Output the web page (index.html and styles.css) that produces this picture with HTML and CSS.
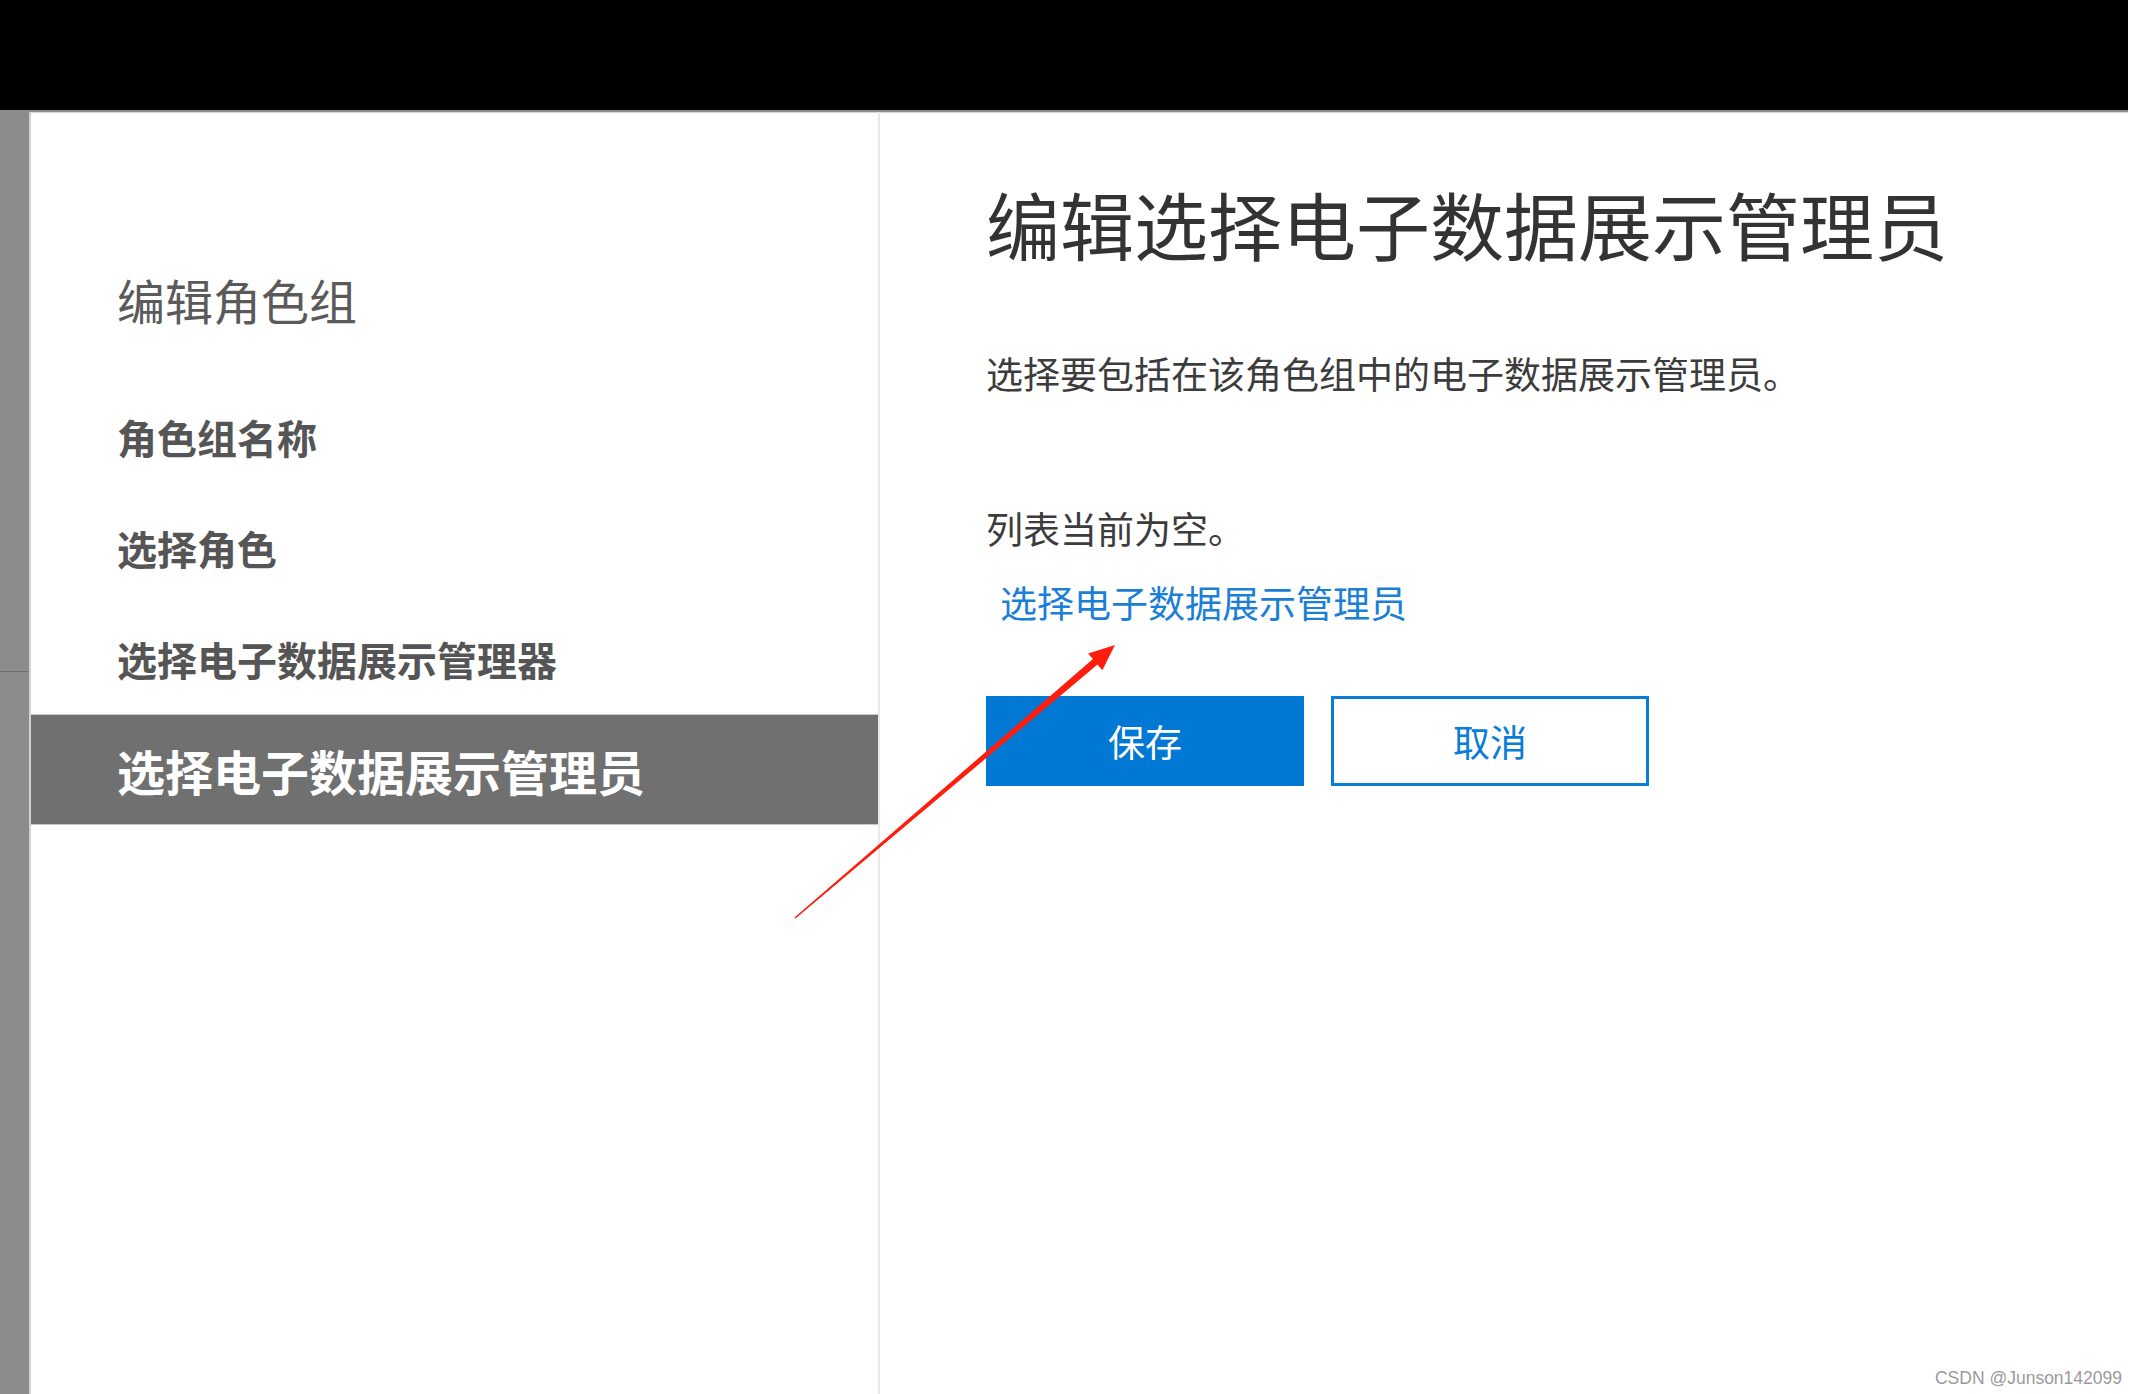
FILE: index.html
```html
<!DOCTYPE html>
<html lang="zh-CN">
<head>
    <meta charset="UTF-8">
    <meta name="viewport" content="width=device-width, initial-scale=1.0">
    <title>编辑角色组</title>
    <link rel="stylesheet" href="styles.css">
</head>
<body>
    <div class="window">
        <div class="titlebar"></div>

        <div class="window-body">
            <div class="side-strip">
                <div class="side-strip-top"></div>
            </div>

            <nav class="steps">
                <div class="steps-title">编辑角色组</div>
                <div class="step">角色组名称</div>
                <div class="step">选择角色</div>
                <div class="step">选择电子数据展示管理器</div>
                <div class="step active">选择电子数据展示管理员</div>
            </nav>

            <main class="content">
                <h1>编辑选择电子数据展示管理员</h1>
                <p class="desc">选择要包括在该角色组中的电子数据展示管理员。</p>
                <p class="empty">列表当前为空。</p>
                <a class="add-link" href="#">选择电子数据展示管理员</a>
                <div class="actions">
                    <button class="btn btn-primary">保存</button>
                    <button class="btn btn-outline">取消</button>
                </div>
            </main>
        </div>
    </div>

    <!-- red annotation arrow pointing at the link -->
    <svg class="annotation" width="2136" height="1394" viewBox="0 0 2136 1394">
        <polygon fill="#ff1d0d"
            points="794.5,917.5 1092.9,659.1 1088.1,653.4 1115,645 1102.3,670.2 1097.5,664.5 795.5,918.5" />
    </svg>

    <div class="watermark">CSDN @Junson142099</div>
</body>
</html>
```

FILE: styles.css
```css
/* Basic Reset */
* {
    margin: 0;
    padding: 0;
    box-sizing: border-box;
}

body {
    font-family: "Noto Sans CJK SC", "Noto Sans", sans-serif;
    background-color: #FFFFFF;
    color: #333;
    width: 2136px;
    height: 1394px;
    overflow: hidden;
    position: relative;
}

.window {
    width: 2128px;
    height: 1394px;
    display: flex;
    flex-direction: column;
}

.titlebar {
    height: 112px;
    background-color: #000000;
    border-bottom: 2px solid #8c8c8c;
    box-shadow: 0 1px 0 #d6d6d6;
}

.window-body {
    flex: 1;
    display: flex;
}

/* grey strip on the far left */
.side-strip {
    width: 31px;
    background-color: #8b8b8b;
    border-right: 2px solid #d2d2d2;
}

.side-strip-top {
    height: 560px;
    border-bottom: 1px solid #6e6e6e;
}

/* wizard steps */
.steps {
    width: 849px;
    border-right: 2px solid #e8e8e8;
    padding-top: 157px;
}

.steps-title {
    height: 60px;
    line-height: 60px;
    font-size: 48px;
    font-weight: 400;
    color: #5a5a5a;
    padding-left: 86px;
    margin-bottom: 52px;
}

.step {
    height: 111px;
    display: flex;
    align-items: center;
    padding-left: 86px;
    font-size: 40px;
    font-weight: 700;
    color: #555;
}

.step.active {
    background-color: #707070;
    border-top: 1px solid #c8c8c8;
    border-bottom: 1px solid #c8c8c8;
    color: #FFFFFF;
    font-size: 48px;
}

/* right side */
.content {
    flex: 1;
    padding-left: 106px;
    padding-top: 61px;
}

.content h1 {
    font-size: 74px;
    line-height: 100px;
    font-weight: 400;
    color: #333;
}

.desc {
    margin-top: 75px;
    font-size: 37px;
    line-height: 50px;
    color: #3c3c3c;
}

.empty {
    margin-top: 105px;
    font-size: 37px;
    line-height: 50px;
    color: #3c3c3c;
}

.add-link {
    display: inline-block;
    margin-top: 24px;
    margin-left: 14px;
    font-size: 37px;
    line-height: 50px;
    color: #1b7fd8;
    text-decoration: none;
}

.actions {
    display: flex;
    gap: 27px;
    margin-top: 69px;
}

.btn {
    width: 318px;
    height: 90px;
    font-family: inherit;
    font-size: 37px;
    cursor: pointer;
}

.btn-primary {
    background-color: #0078d4;
    border: none;
    color: #FFFFFF;
}

.btn-outline {
    background-color: #FFFFFF;
    border: 3px solid #0a7dd8;
    color: #0a7dd8;
}

.annotation {
    position: absolute;
    left: 0;
    top: 0;
    pointer-events: none;
}

.watermark {
    position: absolute;
    right: 14px;
    bottom: 5px;
    font-family: "Liberation Sans", Arial, sans-serif;
    font-size: 17.5px;
    color: #9a9a9a;
}
```
